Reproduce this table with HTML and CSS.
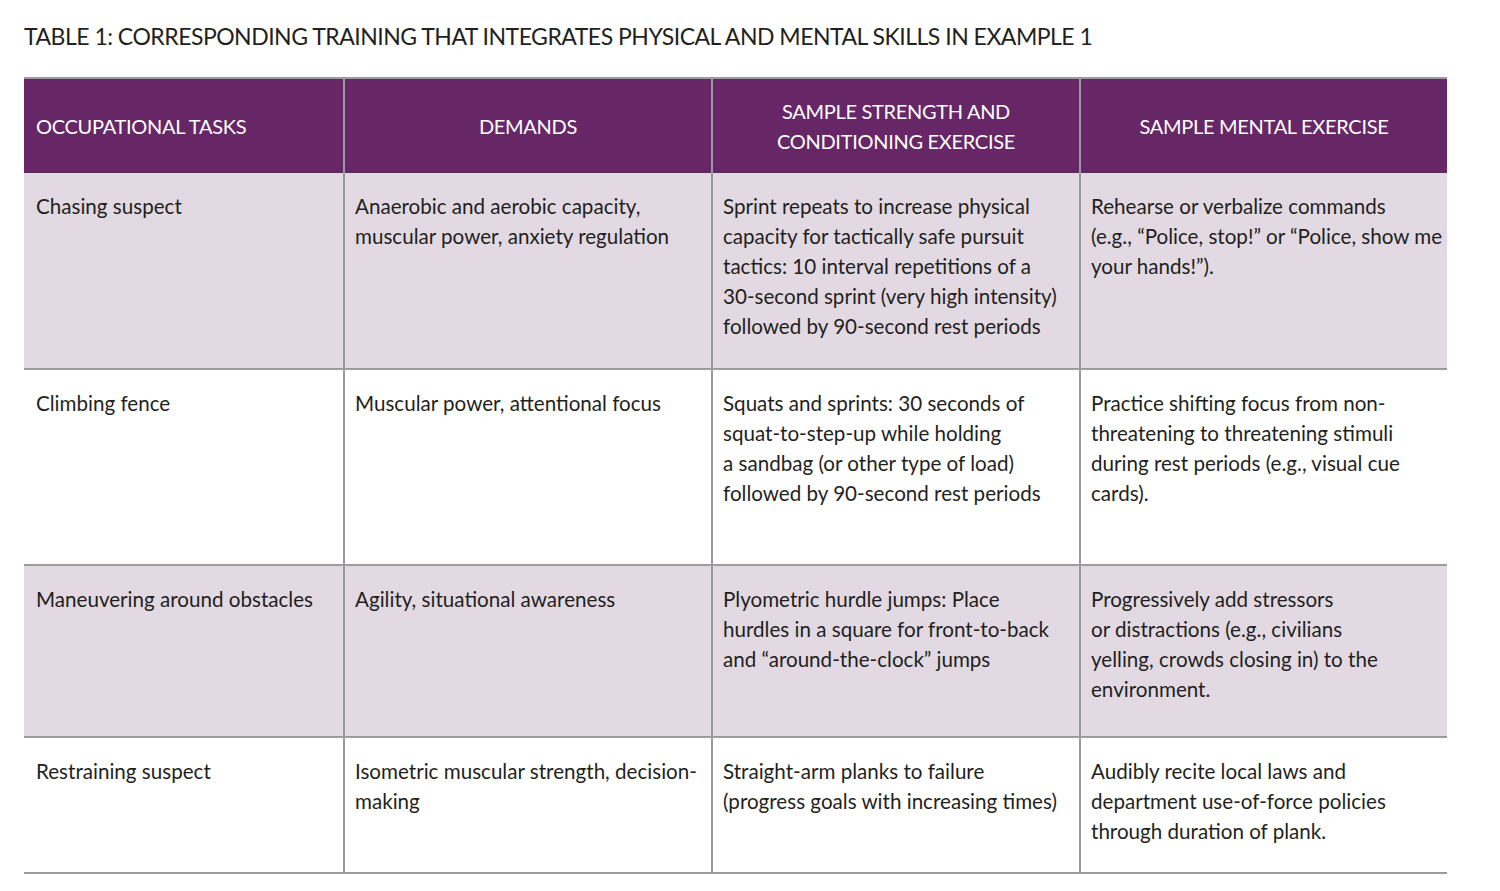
FILE: index.html
```html
<!DOCTYPE html>
<html>
<head>
<meta charset="utf-8">
<link rel="stylesheet" href="styles.css">
</head>
<body>
<div class="page">
  <h1 class="title">TABLE 1: CORRESPONDING TRAINING THAT INTEGRATES PHYSICAL AND MENTAL SKILLS IN EXAMPLE 1</h1>
  <div class="table">
    <div class="row head">
      <div class="cell first">OCCUPATIONAL TASKS</div>
      <div class="cell">DEMANDS</div>
      <div class="cell">SAMPLE STRENGTH AND<br>CONDITIONING EXERCISE</div>
      <div class="cell">SAMPLE MENTAL EXERCISE</div>
    </div>
    <div class="row tint r1">
      <div class="cell">Chasing suspect</div>
      <div class="cell">Anaerobic and aerobic capacity,<br>muscular power, anxiety regulation</div>
      <div class="cell">Sprint repeats to increase physical<br>capacity for tactically safe pursuit<br>tactics: 10 interval repetitions of a<br>30-second sprint (very high intensity)<br>followed by 90-second rest periods</div>
      <div class="cell">Rehearse or verbalize commands<br>(e.g., “Police, stop!” or “Police, show me<br>your hands!”).</div>
    </div>
    <div class="row r2">
      <div class="cell">Climbing fence</div>
      <div class="cell">Muscular power, attentional focus</div>
      <div class="cell">Squats and sprints: 30 seconds of<br>squat-to-step-up while holding<br>a sandbag (or other type of load)<br>followed by 90-second rest periods</div>
      <div class="cell">Practice shifting focus from non-<br>threatening to threatening stimuli<br>during rest periods (e.g., visual cue<br>cards).</div>
    </div>
    <div class="row tint r3">
      <div class="cell">Maneuvering around obstacles</div>
      <div class="cell">Agility, situational awareness</div>
      <div class="cell">Plyometric hurdle jumps: Place<br>hurdles in a square for front-to-back<br>and “around-the-clock” jumps</div>
      <div class="cell">Progressively add stressors<br>or distractions (e.g., civilians<br>yelling, crowds closing in) to the<br>environment.</div>
    </div>
    <div class="row r4">
      <div class="cell">Restraining suspect</div>
      <div class="cell">Isometric muscular strength, decision-<br>making</div>
      <div class="cell">Straight-arm planks to failure<br>(progress goals with increasing times)</div>
      <div class="cell">Audibly recite local laws and<br>department use-of-force policies<br>through duration of plank.</div>
    </div>
  </div>
</div>
</body>
</html>
```

FILE: styles.css
```css
html, body {
  margin: 0;
  padding: 0;
  background: #ffffff;
}

body {
  font-family: "Lato", "Open Sans", "Liberation Sans", sans-serif;
  color: #231f20;
}

.page {
  padding: 22px 0 0 24px;
  width: 1423px;
}

.title {
  margin: 0;
  font-weight: 400;
  font-size: 23px;
  letter-spacing: -0.5px;
  line-height: 28px;
  height: 28px;
  white-space: nowrap;
  color: #231f20;
}

.table {
  margin-top: 27px;
  border-top: 2px solid #9b9b9b;
}

.row {
  display: grid;
  grid-template-columns: 319px 368px 368px 368px;
  border-bottom: 2px solid #9b9b9b;
  box-sizing: border-box;
}

.cell {
  font-size: 20.6px;
  line-height: 30px;
  padding: 18px 10px 0 10px;
  white-space: nowrap;
}

.cell:first-child {
  padding-left: 12px;
}

.cell + .cell {
  border-left: 2px solid #9b9b9b;
}

.head {
  background: #672767;
  height: 94px;
  border-bottom: none;
}

.head .cell {
  color: #ffffff;
  font-size: 20px;
  letter-spacing: -0.3px;
  padding: 0;
  display: flex;
  align-items: center;
  justify-content: center;
  text-align: center;
}

.head .cell.first {
  justify-content: flex-start;
  text-align: left;
  padding-left: 12px;
}

.tint {
  background: #e2d9e3;
}

.r1 { height: 197px; }
.r2 { height: 196px; }
.r3 { height: 172px; }
.r4 { height: 136px; }
```
